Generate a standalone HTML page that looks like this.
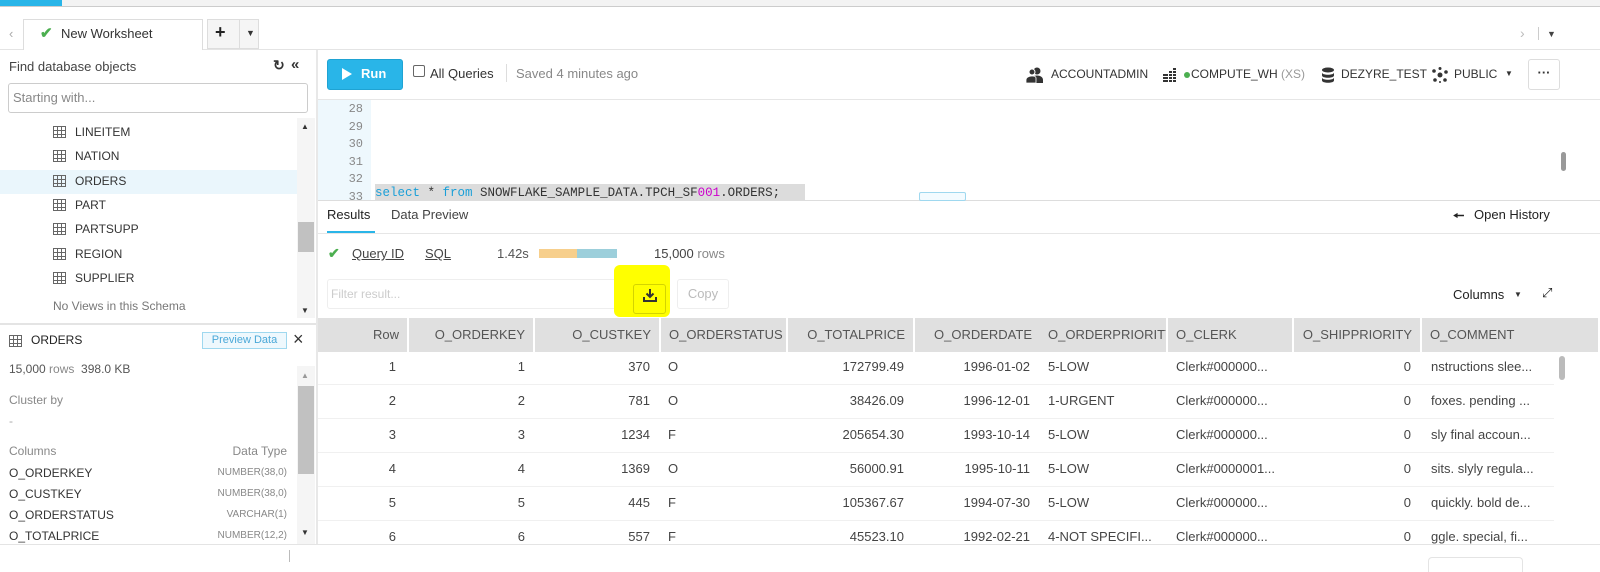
<!DOCTYPE html>
<html><head><meta charset="utf-8"><style>
*{box-sizing:border-box;margin:0;padding:0}
body{width:1600px;height:572px;overflow:hidden;background:#fff;font-family:"Liberation Sans",sans-serif;color:#333;position:relative;font-size:13px}
.a{position:absolute;white-space:nowrap}
.mono{font-family:"Liberation Mono",monospace}
.ti{position:absolute;width:13px;height:12px;border:1px solid #666;background:linear-gradient(#666,#666) 0 3px/100% 1px no-repeat,linear-gradient(#666,#666) 0 7px/100% 1px no-repeat,linear-gradient(#666,#666) 3px 0/1px 100% no-repeat,linear-gradient(#666,#666) 7px 0/1px 100% no-repeat}
.hd{position:absolute;top:318px;height:34px;background:#e0e0e0;font-size:13px;color:#555;line-height:34px;padding:0 8px}
.c{position:absolute;font-size:13px;color:#444}
</style></head><body>
<div class="a" style="left:0;top:0;width:1600px;height:7px;background:#f3f3f3;border-bottom:1px solid #ccc"></div>
<div class="a" style="left:0;top:0;width:62px;height:6px;background:#29b5e8"></div>
<div class="a" style="left:0;top:49px;width:1600px;height:1px;background:#e4e4e4"></div>
<div class="a" style="left:9px;top:26px;color:#aaa;font-size:13px">‹</div>
<div class="a" style="left:23px;top:19px;width:180px;height:31px;border:1px solid #ddd;border-bottom:none;background:#fff"></div>
<div class="a" style="left:40px;top:24px;color:#4caf50;font-size:15px;font-weight:bold">✔</div>
<div class="a" style="left:61px;top:26px;font-size:13px;color:#333">New Worksheet</div>
<div class="a" style="left:207px;top:19px;width:52px;height:30px;border:1px solid #ddd;background:#f5f5f5"></div>
<div class="a" style="left:239px;top:19px;width:1px;height:30px;background:#ddd"></div>
<div class="a" style="left:215px;top:22px;font-size:18px;font-weight:bold;color:#222">+</div>
<div class="a" style="left:246px;top:28px;font-size:9px;color:#333">▼</div>
<div class="a" style="left:1520px;top:25px;color:#bbb;font-size:14px">›</div>
<div class="a" style="left:1538px;top:27px;width:1px;height:13px;background:#ccc"></div>
<div class="a" style="left:1547px;top:29px;font-size:9px;color:#444">▼</div>
<div class="a" style="left:316px;top:50px;width:2px;height:495px;background:#e8e8e8"></div>
<div class="a" style="left:9px;top:59px;font-size:13px;color:#444">Find database objects</div>
<div class="a" style="left:273px;top:57px;font-size:14px;font-weight:bold;color:#333">↻</div>
<div class="a" style="left:291px;top:56px;font-size:15px;font-weight:bold;color:#333">«</div>
<div class="a" style="left:8px;top:83px;width:300px;height:30px;border:1px solid #ccc;border-radius:3px"></div>
<div class="a" style="left:13px;top:90px;color:#888;font-size:13px">Starting with...</div>
<div class="a" style="left:0;top:170px;width:297px;height:24px;background:#eaf6fc"></div>
<div class="ti" style="left:53px;top:126px"></div><div class="a" style="left:75px;top:125px;font-size:12px">LINEITEM</div>
<div class="ti" style="left:53px;top:150px"></div><div class="a" style="left:75px;top:149px;font-size:12px">NATION</div>
<div class="ti" style="left:53px;top:175px"></div><div class="a" style="left:75px;top:174px;font-size:12px">ORDERS</div>
<div class="ti" style="left:53px;top:199px"></div><div class="a" style="left:75px;top:198px;font-size:12px">PART</div>
<div class="ti" style="left:53px;top:223px"></div><div class="a" style="left:75px;top:222px;font-size:12px">PARTSUPP</div>
<div class="ti" style="left:53px;top:248px"></div><div class="a" style="left:75px;top:247px;font-size:12px">REGION</div>
<div class="ti" style="left:53px;top:272px"></div><div class="a" style="left:75px;top:271px;font-size:12px">SUPPLIER</div>
<div class="a" style="left:53px;top:299px;font-size:12px;color:#777">No Views in this Schema</div>
<div class="a" style="left:297px;top:118px;width:18px;height:200px;background:#f5f5f5"></div>
<div class="a" style="left:298px;top:222px;width:16px;height:30px;background:#c1c1c1"></div>
<div class="a" style="left:301px;top:122px;font-size:8px;color:#333">▲</div>
<div class="a" style="left:301px;top:306px;font-size:8px;color:#333">▼</div>
<div class="a" style="left:0;top:323px;width:316px;height:2px;background:#e4e4e4"></div>
<div class="ti" style="left:9px;top:335px"></div>
<div class="a" style="left:31px;top:333px;font-size:12px;color:#222">ORDERS</div>
<div class="a" style="left:202px;top:332px;width:85px;height:17px;border:1px solid #9fd8ef;background:#eef8fd;color:#4aa8d8;font-size:11px;line-height:15px;text-align:center">Preview Data</div>
<div class="a" style="left:293px;top:329px;font-size:18px;color:#333">×</div>
<div class="a" style="left:9px;top:362px;font-size:12px;color:#555">15,000 <span style="color:#888">rows</span> &nbsp;398.0 KB</div>
<div class="a" style="left:9px;top:393px;font-size:12px;color:#888">Cluster by</div>
<div class="a" style="left:9px;top:414px;font-size:12px;color:#aaa">-</div>
<div class="a" style="left:9px;top:444px;font-size:12px;color:#888">Columns</div>
<div class="a" style="right:1313px;top:444px;font-size:12px;color:#888">Data Type</div>
<div class="a" style="left:9px;top:466px;font-size:12px">O_ORDERKEY</div><div class="a" style="right:1313px;top:467px;font-size:10px;color:#888">NUMBER(38,0)</div>
<div class="a" style="left:9px;top:487px;font-size:12px">O_CUSTKEY</div><div class="a" style="right:1313px;top:488px;font-size:10px;color:#888">NUMBER(38,0)</div>
<div class="a" style="left:9px;top:508px;font-size:12px">O_ORDERSTATUS</div><div class="a" style="right:1313px;top:509px;font-size:10px;color:#888">VARCHAR(1)</div>
<div class="a" style="left:9px;top:529px;font-size:12px">O_TOTALPRICE</div><div class="a" style="right:1313px;top:530px;font-size:10px;color:#888">NUMBER(12,2)</div>
<div class="a" style="left:297px;top:366px;width:18px;height:178px;background:#f5f5f5"></div>
<div class="a" style="left:298px;top:386px;width:16px;height:88px;background:#c1c1c1"></div>
<div class="a" style="left:301px;top:371px;font-size:8px;color:#999">▲</div>
<div class="a" style="left:301px;top:528px;font-size:8px;color:#333">▼</div>
<div class="a" style="left:0;top:544px;width:1600px;height:1px;background:#e4e4e4"></div>
<div class="a" style="left:289px;top:550px;width:1px;height:12px;background:#bbb"></div>
<div class="a" style="left:1428px;top:557px;width:95px;height:15px;border:1px solid #e4e4e4;border-bottom:none;border-radius:4px 4px 0 0"></div>
<div class="a" style="left:327px;top:59px;width:76px;height:31px;background:#29b5e8;border-radius:3px;border:1px solid #1fa3d3"></div>
<div class="a" style="left:342px;top:68px;width:0;height:0;border-left:10px solid #fff;border-top:6px solid transparent;border-bottom:6px solid transparent"></div>
<div class="a" style="left:361px;top:66px;color:#fff;font-weight:bold;font-size:13px">Run</div>
<div class="a" style="left:413px;top:65px;width:12px;height:12px;border:1px solid #666;border-radius:2px"></div>
<div class="a" style="left:430px;top:66px;font-size:13px;color:#333">All Queries</div>
<div class="a" style="left:506px;top:64px;width:1px;height:18px;background:#ddd"></div>
<div class="a" style="left:516px;top:66px;font-size:13px;color:#888">Saved 4 minutes ago</div>
<svg class="a" style="left:1026px;top:67px" width="18" height="16" viewBox="0 0 18 16"><circle cx="11" cy="4" r="3.5" fill="#333"/><path d="M5 16v-3c0-3 3-4.5 6-4.5s6 1.5 6 4.5v3z" fill="#333"/><circle cx="6" cy="5" r="3" fill="#333" stroke="#fff"/><path d="M0 16v-3c0-2.5 3-4 6-4s4 1 4 2v5z" fill="#333" stroke="#fff" stroke-width=".8"/></svg>
<div class="a" style="left:1051px;top:67px;font-size:12px;color:#333">ACCOUNTADMIN</div>
<svg class="a" style="left:1163px;top:68px" width="15" height="15"><g fill="#333"><rect x="10" y="0" width="3" height="2"/><rect x="6" y="3" width="3" height="2"/><rect x="10" y="3" width="3" height="2"/><rect x="0" y="6" width="3" height="2"/><rect x="3" y="6" width="2" height="2"/><rect x="6" y="6" width="3" height="2"/><rect x="10" y="6" width="3" height="2"/><rect x="0" y="9" width="3" height="2"/><rect x="3" y="9" width="2" height="2"/><rect x="6" y="9" width="3" height="2"/><rect x="10" y="9" width="3" height="2"/><rect x="0" y="12" width="3" height="2"/><rect x="3" y="12" width="2" height="2"/><rect x="6" y="12" width="3" height="2"/><rect x="10" y="12" width="3" height="2"/></g></svg>
<div class="a" style="left:1184px;top:72px;width:6px;height:6px;border-radius:50%;background:#4caf50"></div>
<div class="a" style="left:1191px;top:67px;font-size:12px;color:#333">COMPUTE_WH <span style="color:#999">(XS)</span></div>
<svg class="a" style="left:1321px;top:67px" width="14" height="16"><g fill="#333"><ellipse cx="7" cy="3" rx="6" ry="2.5"/><path d="M1 5.5c0 3 12 3 12 0v3c0 3-12 3-12 0z"/><path d="M1 10.5c0 3 12 3 12 0v3c0 3-12 3-12 0z"/></g></svg>
<div class="a" style="left:1341px;top:67px;font-size:12px;color:#333">DEZYRE_TEST</div>
<svg class="a" style="left:1432px;top:67px" width="16" height="16"><g fill="#333"><circle cx="8" cy="8" r="2.5"/><circle cx="2" cy="4" r="1.8"/><circle cx="8" cy="1.5" r="1.5"/><circle cx="14" cy="5" r="1.8"/><circle cx="3" cy="13" r="1.8"/><circle cx="13" cy="13" r="1.8"/><circle cx="8" cy="15" r="1"/></g></svg>
<div class="a" style="left:1454px;top:67px;font-size:12px;color:#333">PUBLIC</div>
<div class="a" style="left:1505px;top:69px;font-size:8px;color:#333">▼</div>
<div class="a" style="left:1528px;top:59px;width:32px;height:31px;border:1px solid #ddd;border-radius:3px;text-align:center;font-weight:bold;font-size:13px;line-height:26px">···</div>
<div class="a" style="left:318px;top:99px;width:1282px;height:1px;background:#e6e6e6"></div>
<div class="a" style="left:318px;top:100px;width:53px;height:100px;background:#eef8fd"></div>
<div class="a mono" style="left:336px;top:101px;width:27px;text-align:right;font-size:12px;color:#888;line-height:17.5px">28<br>29<br>30<br>31<br>32<br>33</div>
<div class="a mono" style="left:375px;top:184px;width:430px;height:16px;background:#dcdcdc;overflow:hidden;font-size:12.5px;line-height:18px;color:#333"><span style="color:#1a9fd8">select</span> * <span style="color:#1a9fd8">from</span> SNOWFLAKE_SAMPLE_DATA.TPCH_SF<span style="color:#c0c">001</span>.ORDERS;</div>
<div class="a" style="left:318px;top:200px;width:1282px;height:1px;background:#ddd"></div>
<div class="a" style="left:919px;top:192px;width:47px;height:9px;border:1px solid #9fd8ef;border-radius:2px;background:#f3fbff"></div>
<div class="a" style="left:1561px;top:152px;width:5px;height:19px;background:#999;border-radius:3px"></div>
<div class="a" style="left:327px;top:207px;font-size:13px;color:#222">Results</div>
<div class="a" style="left:327px;top:231px;width:48px;height:2px;background:#29b5e8"></div>
<div class="a" style="left:391px;top:207px;font-size:13px;color:#444">Data Preview</div>
<div class="a" style="left:318px;top:233px;width:1282px;height:1px;background:#e6e6e6"></div>
<div class="a" style="left:1453px;top:207px;font-size:13px;color:#222;font-weight:bold">🠔</div>
<div class="a" style="left:1474px;top:207px;font-size:13px;color:#222">Open History</div>
<div class="a" style="left:328px;top:245px;color:#4caf50;font-size:14px;font-weight:bold">✔</div>
<div class="a" style="left:352px;top:246px;font-size:13px;color:#444;text-decoration:underline">Query ID</div>
<div class="a" style="left:425px;top:246px;font-size:13px;color:#444;text-decoration:underline">SQL</div>
<div class="a" style="left:497px;top:246px;font-size:13px;color:#555">1.42s</div>
<div class="a" style="left:539px;top:249px;width:38px;height:9px;background:#f7cf8c"></div>
<div class="a" style="left:577px;top:249px;width:40px;height:9px;background:#9ccfdb"></div>
<div class="a" style="left:654px;top:246px;font-size:13px;color:#444">15,000 <span style="color:#888">rows</span></div>
<div class="a" style="left:327px;top:279px;width:310px;height:30px;border:1px solid #eee;border-radius:3px"></div>
<div class="a" style="left:331px;top:287px;font-size:12px;color:#ccc">Filter result...</div>
<div class="a" style="left:614px;top:265px;width:56px;height:52px;background:#ffff00;border-radius:6px"></div>
<div class="a" style="left:633px;top:284px;width:33px;height:30px;border:1px solid #d4d400;border-radius:3px"></div>
<svg class="a" style="left:642px;top:287px" width="16" height="16"><path d="M8 2v8M4.5 6.5L8 10l3.5-3.5M2 10v4h12v-4" stroke="#333" stroke-width="2" fill="none"/></svg>
<div class="a" style="left:677px;top:279px;width:52px;height:30px;border:1px solid #eee;border-radius:3px;text-align:center;line-height:28px;color:#bbb;font-size:13px">Copy</div>
<div class="a" style="left:1453px;top:287px;font-size:13px;color:#222">Columns</div>
<div class="a" style="left:1514px;top:290px;font-size:8px;color:#333">▼</div>
<div class="a" style="left:1542px;top:285px;font-size:13px;color:#222">⤢</div>
<div class="hd" style="left:318px;width:89px;text-align:right">Row</div>
<div class="hd" style="left:409px;width:124px;text-align:right">O_ORDERKEY</div>
<div class="hd" style="left:535px;width:124px;text-align:right">O_CUSTKEY</div>
<div class="hd" style="left:661px;width:125px">O_ORDERSTATUS</div>
<div class="hd" style="left:788px;width:125px;text-align:right">O_TOTALPRICE</div>
<div class="hd" style="left:915px;width:125px;text-align:right">O_ORDERDATE</div>
<div class="hd" style="left:1040px;width:126px;overflow:hidden">O_ORDERPRIORITY</div>
<div class="hd" style="left:1168px;width:124px">O_CLERK</div>
<div class="hd" style="left:1294px;width:126px;text-align:right">O_SHIPPRIORITY</div>
<div class="hd" style="left:1422px;width:176px">O_COMMENT</div>
<div class="a" style="left:1559px;top:356px;width:6px;height:24px;background:#bbb;border-radius:3px"></div>
<div id="rows"></div>
<script>
var d=[["1","1","370","O","172799.49","1996-01-02","5-LOW","Clerk#000000...","nstructions slee..."],
["2","2","781","O","38426.09","1996-12-01","1-URGENT","Clerk#000000...","foxes. pending ..."],
["3","3","1234","F","205654.30","1993-10-14","5-LOW","Clerk#000000...","sly final accoun..."],
["4","4","1369","O","56000.91","1995-10-11","5-LOW","Clerk#0000001...","sits. slyly regula..."],
["5","5","445","F","105367.67","1994-07-30","5-LOW","Clerk#000000...","quickly. bold de..."],
["6","6","557","F","45523.10","1992-02-21","4-NOT SPECIFI...","Clerk#000000...","ggle. special, fi..."]];
var h="";
d.forEach(function(r,i){var y=359+i*34;
if(i<5)h+='<div class="a" style="left:318px;top:'+(y+25)+'px;width:1236px;height:1px;background:#f0f0f0"></div>';
function R(x,t){h+='<div class="c" style="right:'+(1600-x)+'px;top:'+y+'px">'+t+'</div>'}
function L(x,t){h+='<div class="c" style="left:'+x+'px;top:'+y+'px">'+t+'</div>'}
R(396,r[0]);R(525,r[1]);R(650,r[2]);L(668,r[3]);R(904,r[4]);R(1030,r[5]);L(1048,r[6]);L(1176,r[7]);R(1411,"0");L(1431,r[8]);});
document.getElementById("rows").innerHTML=h;
</script>
</body></html>
